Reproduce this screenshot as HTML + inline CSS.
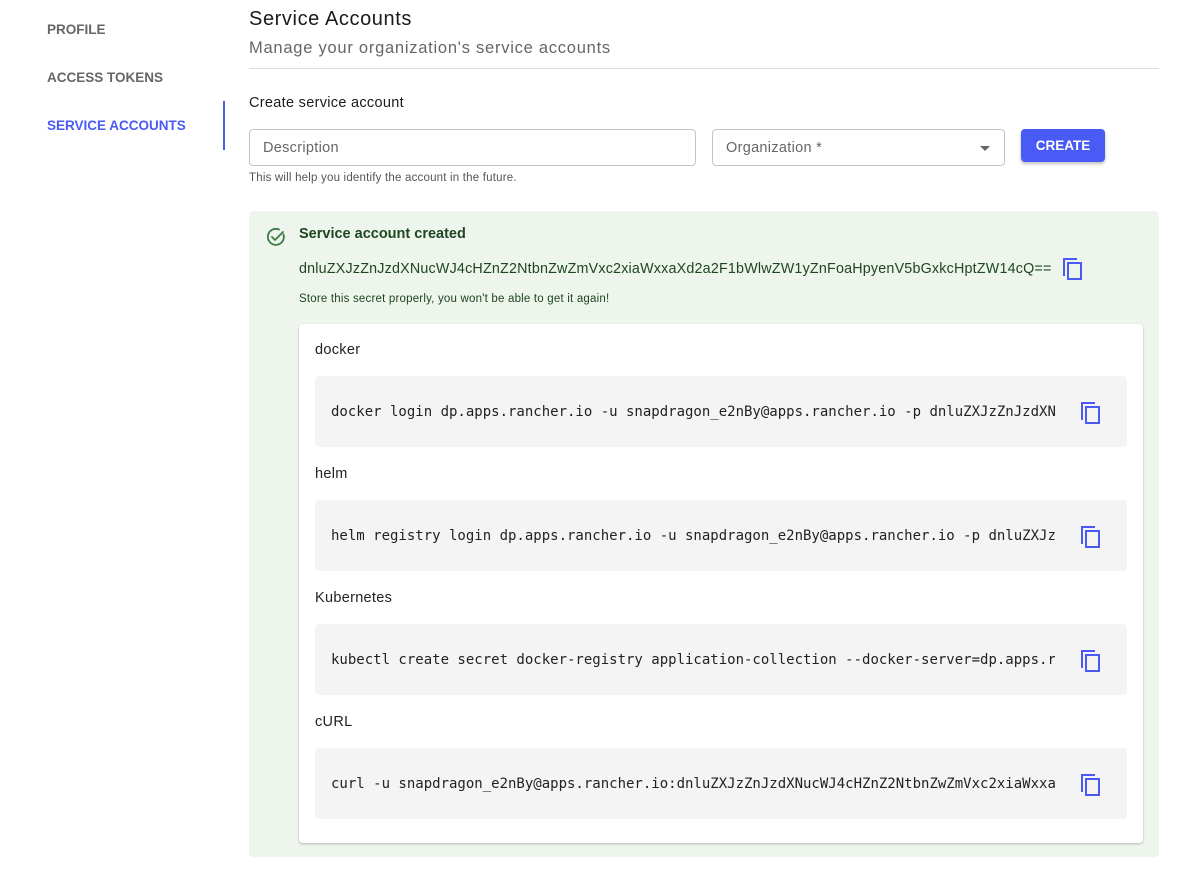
<!DOCTYPE html>
<html><head><meta charset="utf-8"><style>
*{margin:0;padding:0;box-sizing:border-box}
body{width:1200px;height:880px;background:#fff;font-family:"Liberation Sans",sans-serif;position:relative;overflow:hidden;color:#1a1a1a}
.a{position:absolute;white-space:nowrap}
.nav{font-size:13.5px;font-weight:bold;color:#666;left:47px;letter-spacing:0}
.code{position:absolute;left:315px;width:812px;height:71px;background:#f4f4f4;border-radius:4px}
.code span{position:absolute;left:16px;top:28px;width:724px;overflow:hidden;font-family:"DejaVu Sans Mono","Liberation Mono",monospace;font-size:14px;color:#222;white-space:nowrap}
.code svg{position:absolute;left:765px;top:25px}
.lbl{position:absolute;left:315px;font-size:14.5px;color:#222;letter-spacing:.3px}
</style></head><body>
<div class="a nav" style="top:22px">PROFILE</div>
<div class="a nav" style="top:70px">ACCESS TOKENS</div>
<div class="a nav" style="top:118px;color:#4a5af5">SERVICE ACCOUNTS</div>
<div class="a" style="left:223px;top:101px;width:2px;height:49px;background:#4a5af5"></div>

<div class="a" style="left:249px;top:8px;font-size:20px;color:#1a1a1a;letter-spacing:.6px">Service Accounts</div>
<div class="a" style="left:249px;top:39px;font-size:16.5px;color:#666;letter-spacing:.75px">Manage your organization's service accounts</div>
<div class="a" style="left:249px;top:68px;width:910px;height:1px;background:#ddd"></div>
<div class="a" style="left:249px;top:95px;font-size:14.5px;letter-spacing:.3px">Create service account</div>

<div class="a" style="left:249px;top:129px;width:447px;height:37px;border:1px solid #c4c4c4;border-radius:4px"></div>
<div class="a" style="left:263px;top:140px;font-size:14.5px;color:#666;letter-spacing:.3px">Description</div>
<div class="a" style="left:712px;top:129px;width:293px;height:37px;border:1px solid #c4c4c4;border-radius:4px"></div>
<div class="a" style="left:726px;top:140px;font-size:14.5px;color:#666;letter-spacing:.3px">Organization *</div>
<div class="a" style="left:980px;top:146px;width:0;height:0;border-left:5px solid transparent;border-right:5px solid transparent;border-top:5px solid #666"></div>
<div class="a" style="left:1021px;top:129px;width:84px;height:33px;background:#4a5af5;border-radius:4px;box-shadow:0 2px 3px rgba(0,0,0,.25);color:#fff;font-weight:bold;font-size:13.5px;text-align:center;line-height:33px">CREATE</div>
<div class="a" style="left:249px;top:172px;font-size:11.5px;color:#555;letter-spacing:.2px">This will help you identify the account in the future.</div>

<div class="a" style="left:249px;top:211px;width:910px;height:646px;background:#edf5ed;border-radius:4px"></div>
<svg class="a" style="left:265px;top:226px" width="22" height="22" viewBox="0 0 22 22"><path d="M18.5 8.5A8 8 0 1 1 14 3.5" fill="none" stroke="#3d7a45" stroke-width="1.8" stroke-linecap="round"/><path d="M7 11l3 3 8-8" fill="none" stroke="#3d7a45" stroke-width="1.8" stroke-linecap="round" stroke-linejoin="round"/></svg>
<div class="a" style="left:299px;top:226px;font-size:14.5px;font-weight:bold;color:#1e4620">Service account created</div>
<div class="a" style="left:299px;top:261px;font-size:14.3px;color:#1e4620;letter-spacing:.2px">dnluZXJzZnJzdXNucWJ4cHZnZ2NtbnZwZmVxc2xiaWxxaXd2a2F1bWlwZW1yZnFoaHpyenV5bGxkcHptZW14cQ==</div>
<svg class="a" style="left:1062px;top:257px" width="22" height="23" viewBox="0 0 22 23"><path d="M2 19V2h13" fill="none" stroke="#4a5af5" stroke-width="2"/><rect x="6" y="6" width="13" height="16" fill="none" stroke="#4a5af5" stroke-width="2"/></svg>
<div class="a" style="left:299px;top:293px;font-size:11.5px;color:#1e4620;letter-spacing:.2px">Store this secret properly, you won't be able to get it again!</div>

<div class="a" style="left:299px;top:324px;width:844px;height:519px;background:#fff;border-radius:4px;box-shadow:0 1px 2px rgba(0,0,0,.25)"></div>
<div class="lbl" style="top:342px">docker</div>
<div class="code" style="top:376px"><span>docker login dp.apps.rancher.io -u snapdragon_e2nBy@apps.rancher.io -p dnluZXJzZnJzdXNucWJ4cHZnZ2NtbnZwZmVxc2xiaWxx</span><svg width="22" height="23" viewBox="0 0 22 23"><path d="M2 19V2h13" fill="none" stroke="#4a5af5" stroke-width="2"/><rect x="6" y="6" width="13" height="16" fill="none" stroke="#4a5af5" stroke-width="2"/></svg></div>
<div class="lbl" style="top:466px">helm</div>
<div class="code" style="top:500px"><span>helm registry login dp.apps.rancher.io -u snapdragon_e2nBy@apps.rancher.io -p dnluZXJzZnJzdXNucWJ4</span><svg width="22" height="23" viewBox="0 0 22 23"><path d="M2 19V2h13" fill="none" stroke="#4a5af5" stroke-width="2"/><rect x="6" y="6" width="13" height="16" fill="none" stroke="#4a5af5" stroke-width="2"/></svg></div>
<div class="lbl" style="top:590px">Kubernetes</div>
<div class="code" style="top:624px"><span>kubectl create secret docker-registry application-collection --docker-server=dp.apps.rancher.io</span><svg width="22" height="23" viewBox="0 0 22 23"><path d="M2 19V2h13" fill="none" stroke="#4a5af5" stroke-width="2"/><rect x="6" y="6" width="13" height="16" fill="none" stroke="#4a5af5" stroke-width="2"/></svg></div>
<div class="lbl" style="top:714px">cURL</div>
<div class="code" style="top:748px"><span>curl -u snapdragon_e2nBy@apps.rancher.io:dnluZXJzZnJzdXNucWJ4cHZnZ2NtbnZwZmVxc2xiaWxxaXd2</span><svg width="22" height="23" viewBox="0 0 22 23"><path d="M2 19V2h13" fill="none" stroke="#4a5af5" stroke-width="2"/><rect x="6" y="6" width="13" height="16" fill="none" stroke="#4a5af5" stroke-width="2"/></svg></div>
</body></html>
